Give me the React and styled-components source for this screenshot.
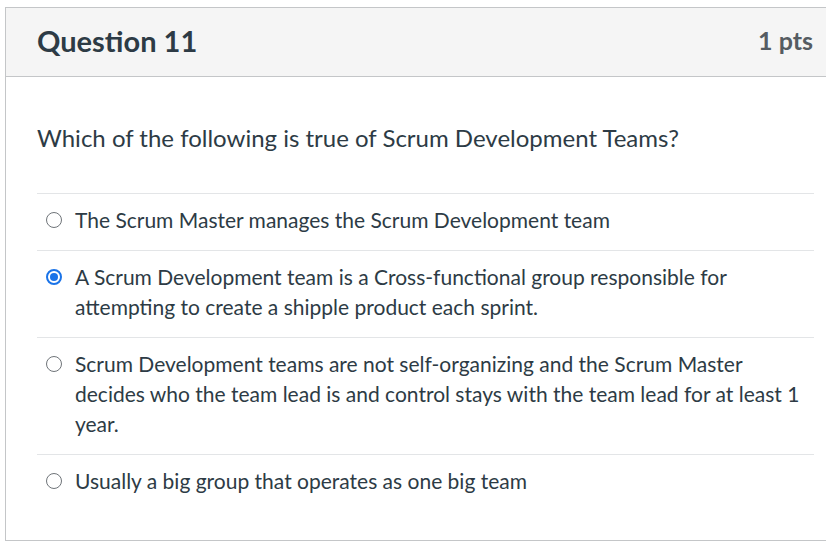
import styled, { createGlobalStyle } from "styled-components";

const GlobalStyle = createGlobalStyle`
  html, body {
    margin: 0;
    padding: 0;
    background: #ffffff;
    overflow: hidden;
  }
  body {
    font-family: Lato, "Open Sans", sans-serif;
    color: #2d3b45;
  }
`;

const Page = styled.div`
  padding: 7px 0 0 5px;
`;

const Card = styled.div`
  width: 822px;
  border: 1px solid #c4c6c8;
  box-sizing: border-box;
`;

const Header = styled.div`
  display: flex;
  align-items: center;
  justify-content: space-between;
  box-sizing: border-box;
  height: 69px;
  padding: 0 13px 4px 31px;
  background: #f5f5f5;
  border-bottom: 1px solid #c4c6c8;
`;

const Title = styled.h2`
  margin: 0;
  font-size: 29px;
  font-weight: 700;
  color: #2d3b45;
`;

const Points = styled.div`
  font-size: 25px;
  font-weight: 700;
  color: #555c62;
`;

const Body = styled.div`
  padding: 43px 12px 29px 31px;
`;

const Prompt = styled.p`
  margin: 0 0 37px;
  font-size: 24px;
  line-height: 36px;
  color: #2d3b45;
`;

const Answers = styled.div`
  display: flex;
  flex-direction: column;
`;

const Answer = styled.label`
  display: flex;
  align-items: flex-start;
  gap: 13px;
  padding: 11px 0 15px 9px;
  border-top: 1px solid #e3e5e7;
  font-size: 21px;
  line-height: 30px;
  color: #2d3b45;
`;

const Radio = styled.span`
  flex: none;
  box-sizing: border-box;
  width: 16px;
  height: 16px;
  margin-top: 7px;
  border-radius: 50%;
  border: ${(p) => (p.checked ? "2px solid #1a73e8" : "1px solid #6f7479")};
  display: flex;
  align-items: center;
  justify-content: center;
  background: #fff;

  &::after {
    content: "";
    display: ${(p) => (p.checked ? "block" : "none")};
    width: 8px;
    height: 8px;
    border-radius: 50%;
    background: #1a73e8;
  }
`;

const answers = [
  { text: "The Scrum Master manages the Scrum Development team" },
  {
    text: "A Scrum Development team is a Cross-functional group responsible for attempting to create a shipple product each sprint.",
    checked: true,
  },
  {
    text: "Scrum Development teams are not self-organizing and the Scrum Master decides who the team lead is and control stays with the team lead for at least 1 year.",
  },
  { text: "Usually a big group that operates as one big team" },
];

export default function App() {
  return (
    <Page>
      <GlobalStyle />
      <Card>
        <Header>
          <Title>Question 11</Title>
          <Points>1 pts</Points>
        </Header>
        <Body>
          <Prompt>Which of the following is true of Scrum Development Teams?</Prompt>
          <Answers>
            {answers.map((a, i) => (
              <Answer key={i}>
                <Radio checked={a.checked} />
                <span>{a.text}</span>
              </Answer>
            ))}
          </Answers>
        </Body>
      </Card>
    </Page>
  );
}
